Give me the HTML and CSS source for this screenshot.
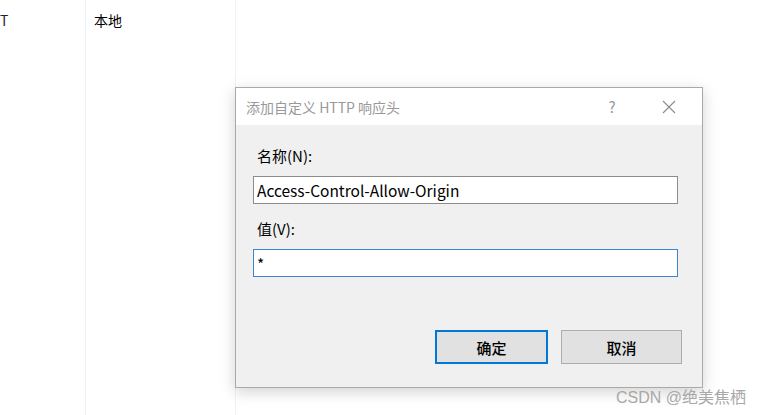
FILE: index.html
```html
<!DOCTYPE html>
<html lang="zh-CN">
<head>
    <meta charset="UTF-8">
    <title>添加自定义 HTTP 响应头</title>
    <link rel="stylesheet" href="styles.css">
</head>
<body>
    <div class="list">
        <div class="col col-type"><span class="cell cut">T</span></div>
        <div class="col col-entry"><span class="cell">本地</span></div>
        <div class="col col-rest"></div>
    </div>

    <div class="dialog">
        <div class="titlebar">
            <span class="title">添加自定义 HTTP 响应头</span>
            <span class="help">?</span>
            <span class="close">
                <svg width="14" height="14" viewBox="0 0 14 14"><path d="M1 1L13 13M13 1L1 13" stroke="#8a8a8a" stroke-width="1.1" fill="none"/></svg>
            </span>
        </div>
        <div class="content">
            <label class="field-label">名称(N):</label>
            <input class="field" type="text" value="Access-Control-Allow-Origin">
            <label class="field-label">值(V):</label>
            <input class="field focused" type="text" value="*">
            <div class="actions">
                <button class="btn default">确定</button>
                <button class="btn">取消</button>
            </div>
        </div>
    </div>

    <div class="watermark">CSDN @绝美焦栖</div>
</body>
</html>
```

FILE: styles.css
```css
body {
    margin: 0;
    width: 761px;
    height: 415px;
    overflow: hidden;
    background-color: #fff;
    font-family: "Noto Sans CJK SC", "Noto Sans", sans-serif;
    font-size: 14px;
    color: #000;
    position: relative;
}
.list {
    display: flex;
    height: 100%;
}
.col {
    box-sizing: border-box;
    padding-top: 10px;
}
.col-type {
    width: 86px;
    border-right: 1px solid #eef3fa;
    overflow: hidden;
}
.col-entry {
    width: 150px;
    border-right: 1px solid #eef3fa;
    padding-left: 8px;
}
.col-rest {
    flex: 1;
}
.cell {
    display: block;
    line-height: 20px;
}
.cut {
    color: #2a1a3a;
}
.dialog {
    position: absolute;
    left: 235px;
    top: 87px;
    width: 468px;
    height: 301px;
    box-sizing: border-box;
    border: 1px solid #a9a9a9;
    background-color: #f0f0f0;
    box-shadow: 0 4px 14px rgba(0,0,0,0.18);
    display: flex;
    flex-direction: column;
}
.titlebar {
    height: 37px;
    background-color: #fff;
    display: flex;
    align-items: center;
    padding-left: 10px;
}
.title {
    flex: 1;
    color: #999;
    font-size: 14px;
}
.help {
    color: #999;
    font-size: 15px;
    width: 22px;
    margin-right: 36px;
    text-align: center;
}
.close {
    width: 20px;
    margin-right: 23px;
    display: flex;
    justify-content: center;
}
.content {
    flex: 1;
    display: flex;
    flex-direction: column;
    padding: 21px 24px 0 17px;
}
.field-label {
    font-size: 15px;
    line-height: 20px;
    margin-left: 4px;
    margin-bottom: 10px;
}
.field {
    box-sizing: border-box;
    width: 425px;
    height: 28px;
    border: 1px solid #8c8c8c;
    padding: 0 3px;
    font-family: "Noto Sans CJK SC", "Noto Sans", sans-serif;
    font-size: 15.5px;
    color: #000;
    background-color: #fff;
    outline: none;
    margin-bottom: 15px;
}
.field.focused {
    border-color: #3c86d0;
}
.actions {
    display: flex;
    justify-content: flex-end;
    gap: 13px;
    margin-top: 38px;
    margin-right: -4px;
}
.btn {
    width: 113px;
    height: 34px;
    box-sizing: border-box;
    border: 1px solid #adadad;
    background-color: #e1e1e1;
    font-family: "Noto Sans CJK SC", sans-serif;
    font-size: 15px;
    font-weight: 500;
    color: #000;
    padding: 0;
}
.btn + .btn {
    width: 121px;
}
.btn.default {
    border: 2px solid #0078d7;
}
.watermark {
    position: absolute;
    right: 15px;
    bottom: 7px;
    color: #a8a8a8;
    font-size: 16px;
    font-family: "Liberation Sans", "Noto Sans CJK SC", sans-serif;
}
```
